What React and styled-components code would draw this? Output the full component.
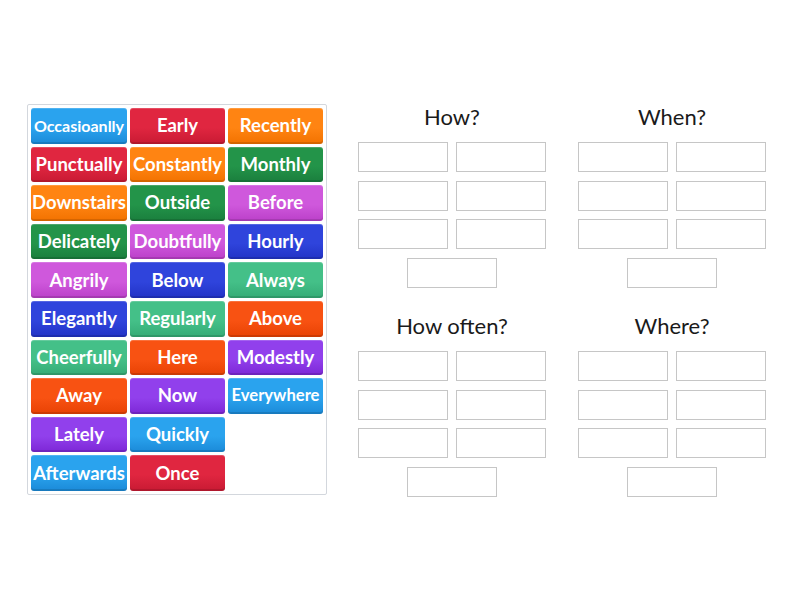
import React from "react";
import styled, { createGlobalStyle } from "styled-components";

const Global = createGlobalStyle`
  html, body { margin: 0; padding: 0; background: #fff; }
  body { width: 800px; height: 600px; overflow: hidden; }
`;

const COLORS = {
  blue: ["#2aa3ee", "#1b8ad8"],
  red: ["#e02640", "#c81a33"],
  orange: ["#ff8412", "#f27200"],
  green: ["#239449", "#1a7e3d"],
  pink: ["#cf58dc", "#bb40c9"],
  navy: ["#2f44dc", "#2233c6"],
  mint: ["#44c088", "#35ab76"],
  flame: ["#f85212", "#e84204"],
  violet: ["#9140ec", "#7d27d6"],
};

const tiles = [
  ["Occasioanlly", "blue", 16],
  ["Early", "red"],
  ["Recently", "orange"],
  ["Punctually", "red"],
  ["Constantly", "orange"],
  ["Monthly", "green"],
  ["Downstairs", "orange"],
  ["Outside", "green"],
  ["Before", "pink"],
  ["Delicately", "green"],
  ["Doubtfully", "pink"],
  ["Hourly", "navy"],
  ["Angrily", "pink"],
  ["Below", "navy"],
  ["Always", "mint"],
  ["Elegantly", "navy"],
  ["Regularly", "mint"],
  ["Above", "flame"],
  ["Cheerfully", "mint"],
  ["Here", "flame"],
  ["Modestly", "violet"],
  ["Away", "flame"],
  ["Now", "violet"],
  ["Everywhere", "blue", 16.6],
  ["Lately", "violet"],
  ["Quickly", "blue"],
  null,
  ["Afterwards", "blue"],
  ["Once", "red"],
];

const Page = styled.div`
  display: flex;
  align-items: flex-start;
  gap: 31px;
  padding: 103px 0 0 27px;
`;

const TilePanel = styled.div`
  margin-top: 1px;
  width: 300px;
  height: 391px;
  box-sizing: border-box;
  border: 1px solid #d3d7dd;
  border-radius: 2px;
  padding: 3px;
  display: grid;
  grid-template-columns: 96px 95px 95px;
  grid-template-rows: repeat(10, 1fr);
  column-gap: 3px;
  row-gap: 3px;
`;

const Tile = styled.div`
  display: flex;
  align-items: center;
  justify-content: center;
  border-radius: 3px;
  background: linear-gradient(${(p) => p.$c[0]} 0%, ${(p) => p.$c[0]} 55%, ${(p) => p.$c[1]} 100%);
  box-shadow: inset 0 -2px 0 rgba(0, 0, 0, 0.12), inset 0 1px 0 rgba(255, 255, 255, 0.18);
  color: #fff;
  font-family: "Lato", "Open Sans", sans-serif;
  font-weight: 700;
  font-size: ${(p) => p.$size || 18.5}px;
  white-space: nowrap;
  overflow: hidden;
  padding-bottom: 1px;
`;

const Empty = styled.div``;

const Targets = styled.div`
  display: grid;
  grid-template-columns: 188px 188px;
  column-gap: 32px;
  row-gap: 24px;
`;

const Group = styled.div`
  display: flex;
  flex-direction: column;
  align-items: center;
`;

const Heading = styled.div`
  font-family: "Lato", "Noto Sans", sans-serif;
  font-weight: 400;
  font-size: 22px;
  line-height: 28px;
  color: #1a1a1a;
  margin-bottom: 11px;
`;

const Slots = styled.div`
  display: grid;
  grid-template-columns: 90px 90px;
  column-gap: 8px;
  row-gap: 8.7px;
  justify-content: center;
`;

const Slot = styled.div`
  box-sizing: border-box;
  width: 90px;
  height: 30px;
  border: 1px solid #c6c6c6;
  background: #fff;
  ${(p) => (p.$center ? "grid-column: 1 / span 2; justify-self: center;" : "")}
`;

const groups = ["How?", "When?", "How often?", "Where?"];

export default function App() {
  return (
    <>
      <Global />
      <Page>
        <TilePanel>
          {tiles.map((t, i) =>
            t ? (
              <Tile key={i} $c={COLORS[t[1]]} $size={t[2]}>
                {t[0]}
              </Tile>
            ) : (
              <Empty key={i} />
            )
          )}
        </TilePanel>
        <Targets>
          {groups.map((g) => (
            <Group key={g}>
              <Heading>{g}</Heading>
              <Slots>
                {[0, 1, 2, 3, 4, 5].map((n) => (
                  <Slot key={n} />
                ))}
                <Slot $center />
              </Slots>
            </Group>
          ))}
        </Targets>
      </Page>
    </>
  );
}
